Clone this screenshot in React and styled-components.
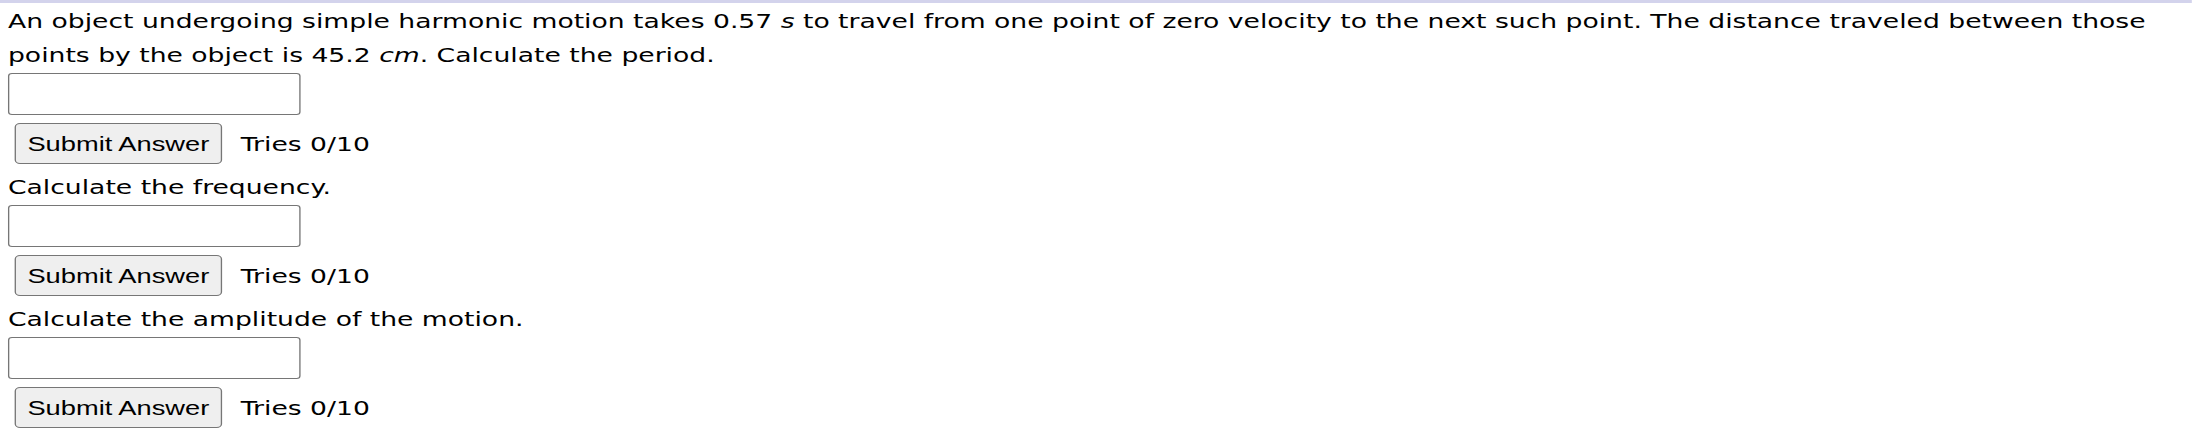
import React from "react";
import styled, { createGlobalStyle } from "styled-components";

const SX = 1.33;

const GlobalStyle = createGlobalStyle`
  html, body {
    margin: 0;
    padding: 0;
    background: #ffffff;
    overflow: hidden;
  }
`;

const Stage = styled.div`
  width: ${2192 / SX}px;
  transform: scaleX(${SX});
  transform-origin: 0 0;
  border-top: 3px solid #d3d3ec;
  padding: 1px 0 0 6px;
  box-sizing: border-box;
  font-family: "DejaVu Sans", Verdana, sans-serif;
  font-size: 20px;
  color: #000;
`;

const Part = styled.section`
  display: flex;
  flex-direction: column;
  align-items: flex-start;
  margin-bottom: 6px;
`;

const Prompt = styled.div`
  line-height: 34px;
  width: ${(2192 - 16) / SX}px;
  em {
    font-style: italic;
  }
`;

const AnswerInput = styled.input`
  display: block;
  box-sizing: border-box;
  width: 220px;
  height: 42px;
  margin: 1px 0 8px 0;
  border: 1.5px solid #767676;
  border-radius: 3px;
  background: #fff;
  padding: 0 4px;
  font: inherit;
`;

const ButtonRow = styled.div`
  display: flex;
  align-items: center;
  gap: 14px;
  padding-left: 5px;
`;

const SubmitButton = styled.button`
  box-sizing: border-box;
  width: 156px;
  height: 41px;
  padding: 0;
  background: #efefef;
  border: 1.5px solid #767676;
  border-radius: 4px;
  font-family: "Liberation Sans", Arial, sans-serif;
  font-size: 20.5px;
  color: #000;
  cursor: pointer;
`;

const Tries = styled.span`
  font-size: 20px;
  line-height: 34px;
`;

const parts = [
  {
    id: "period",
    prompt: (
      <>
        An object undergoing simple harmonic motion takes 0.57 <em>s</em> to
        travel from one point of zero velocity to the next such point. The
        distance traveled between those points by the object is 45.2{" "}
        <em>cm</em>. Calculate the period.
      </>
    ),
  },
  { id: "frequency", prompt: "Calculate the frequency." },
  { id: "amplitude", prompt: "Calculate the amplitude of the motion." },
];

export default function App() {
  return (
    <>
      <GlobalStyle />
      <Stage>
        {parts.map((p) => (
          <Part key={p.id}>
            <Prompt>{p.prompt}</Prompt>
            <AnswerInput type="text" aria-label={p.id} />
            <ButtonRow>
              <SubmitButton type="button">Submit Answer</SubmitButton>
              <Tries>Tries 0/10</Tries>
            </ButtonRow>
          </Part>
        ))}
      </Stage>
    </>
  );
}
